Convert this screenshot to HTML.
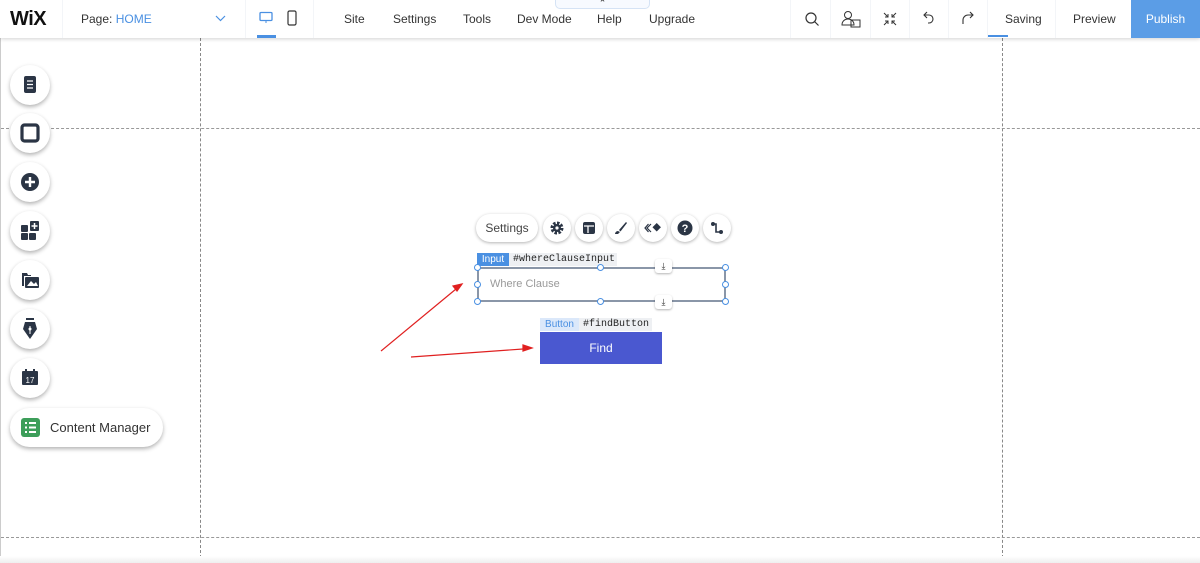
<!DOCTYPE html>
<html><head><meta charset="utf-8"><style>
*{margin:0;padding:0;box-sizing:border-box}
body{width:1200px;height:563px;overflow:hidden;background:#fff;font-family:"Liberation Sans",sans-serif;position:relative;color:#333}
.top{position:absolute;left:0;top:0;width:1200px;height:38px;background:#fff;box-shadow:0 1px 4px rgba(0,0,0,.18);z-index:5}
.t{position:absolute;top:12px;font-size:12px;color:#333}
.sep{position:absolute;top:0;width:1px;height:38px;background:#f3f5f8}
.vd{position:absolute;top:38px;width:0;height:525px;border-left:1px dashed #888}
.hd{position:absolute;left:1px;width:1199px;height:0;border-top:1px dashed #999}
.cb{position:absolute;left:10px;width:40px;height:40px;border-radius:50%;background:#fff;box-shadow:0 2px 4px rgba(0,0,0,.3);display:flex;align-items:center;justify-content:center}
.tb{position:absolute;top:214px;width:28px;height:28px;border-radius:50%;background:#fff;box-shadow:0 1px 3px rgba(0,0,0,.3);display:flex;align-items:center;justify-content:center}
.h{position:absolute;width:7px;height:7px;border-radius:50%;background:#fff;border:1px solid #4a90e2}
.mono{font-family:"Liberation Mono",monospace}
</style></head><body>
<div style="position:absolute;left:0;top:0;width:1px;height:563px;background:#ccc"></div>
<div class="vd" style="left:200px"></div>
<div class="vd" style="left:1002px"></div>
<div class="hd" style="top:128px"></div>
<div class="hd" style="top:537px"></div>
<div style="position:absolute;left:0;top:556px;width:1200px;height:7px;background:linear-gradient(#fff,#eee)"></div>

<div class="top">
<div style="position:absolute;left:10px;top:8px;font-size:20px;font-weight:bold;letter-spacing:-0.5px;color:#111">WiX</div>
<div class="sep" style="left:62px"></div>
<div class="t" style="left:81px">Page: <span style="color:#4a90e2">HOME</span></div>
<svg style="position:absolute;left:215px;top:15px" width="11" height="7"><path d="M1 1l4.5 4.5L10 1" fill="none" stroke="#4a90e2" stroke-width="1.2"/></svg>
<div class="sep" style="left:245px"></div>
<svg style="position:absolute;left:259px;top:11px" width="14" height="14"><rect x="1" y="1.5" width="12" height="8" rx="1" fill="none" stroke="#4a90e2" stroke-width="1.3"/><path d="M7 10v2" stroke="#4a90e2"/></svg>
<div style="position:absolute;left:257px;top:35px;width:19px;height:3px;background:#4a90e2"></div>
<svg style="position:absolute;left:287px;top:10px" width="10" height="16"><rect x="1" y="1" width="8" height="14" rx="1.5" fill="none" stroke="#333" stroke-width="1.2"/></svg>
<div class="sep" style="left:313px"></div>
<div class="t" style="left:344px">Site</div>
<div class="t" style="left:393px">Settings</div>
<div class="t" style="left:463px">Tools</div>
<div class="t" style="left:517px">Dev Mode</div>
<div class="t" style="left:597px">Help</div>
<div class="t" style="left:649px">Upgrade</div>
<div style="position:absolute;left:555px;top:-2px;width:95px;height:11px;border:1px solid #d5e3f5;border-radius:0 0 5px 5px;background:#f7faff;font-size:9px;text-align:center;line-height:8px">&#8963;</div>
<div class="sep" style="left:790px"></div>
<svg style="position:absolute;left:804px;top:11px" width="16" height="16"><circle cx="7" cy="7" r="5" fill="none" stroke="#333" stroke-width="1.2"/><path d="M10.5 10.5l4 4" stroke="#333" stroke-width="1.2"/></svg>
<div class="sep" style="left:830px"></div>
<svg style="position:absolute;left:841px;top:10px" width="20" height="18"><circle cx="7" cy="5" r="3.5" fill="none" stroke="#333"/><path d="M1 15c0-4 3-6 6-6s6 2 6 6z M10 10h9v7h-9z" fill="#fff" stroke="#333"/></svg>
<div class="sep" style="left:870px"></div>
<svg style="position:absolute;left:883px;top:12px" width="14" height="14"><path d="M1 1l4 4M5 2v3H2M13 1l-4 4M9 2v3h3M1 13l4-4M2 9h3v3M13 13l-4-4M12 9H9v3" fill="none" stroke="#333"/></svg>
<div class="sep" style="left:909px"></div>
<svg style="position:absolute;left:922px;top:11px" width="14" height="16"><path d="M5 1L2 4l3 3M2 4h5a4 4 0 010 8H6" fill="none" stroke="#333" stroke-width="1.1"/></svg>
<div class="sep" style="left:948px"></div>
<svg style="position:absolute;left:961px;top:11px" width="14" height="16"><path d="M9 1l3 3-3 3M12 4H7a5 5 0 00-5 5v4" fill="none" stroke="#333" stroke-width="1.1"/></svg>
<div class="sep" style="left:987px"></div>
<div class="t" style="left:1005px">Saving</div>
<div style="position:absolute;left:988px;top:35px;width:20px;height:2px;background:#4a90e2"></div>
<div class="sep" style="left:1055px"></div>
<div class="t" style="left:1073px">Preview</div>
<div style="position:absolute;left:1131px;top:0;width:69px;height:38px;background:#5b9de6;color:#fff;font-size:12px;line-height:38px;text-align:center">Publish</div>
</div>

<div class="cb" style="top:65px"><svg width="18" height="20"><rect x="3" y="1" width="12" height="17" rx="2" fill="#2b3545"/><path d="M6 6h6M6 9.5h6M6 13h6" stroke="#fff" stroke-width="1.3"/></svg></div>
<div class="cb" style="top:113px"><svg width="20" height="20"><rect x="2" y="2" width="16" height="16" rx="2.5" fill="none" stroke="#2b3545" stroke-width="3.2"/></svg></div>
<div class="cb" style="top:162px"><svg width="20" height="20"><circle cx="10" cy="10" r="9" fill="#2b3545"/><path d="M10 5v10M5 10h10" stroke="#fff" stroke-width="2.4"/></svg></div>
<div class="cb" style="top:211px"><svg width="20" height="20"><rect x="1" y="4" width="7" height="7" rx="1" fill="#2b3545"/><rect x="1" y="12" width="7" height="7" rx="1" fill="#2b3545"/><rect x="9" y="12" width="7" height="7" rx="1" fill="#2b3545"/><rect x="10" y="0" width="9" height="10" rx="1" fill="#2b3545"/><path d="M14.5 2v6M11.5 5h6" stroke="#fff" stroke-width="1.5"/></svg></div>
<div class="cb" style="top:260px"><svg width="20" height="20"><path d="M2 3h5l1 2h3v1H4v10H2z" fill="#2b3545"/><rect x="5" y="7" width="14" height="11" rx="1" fill="#2b3545"/><path d="M7 16l4-5 3 3 2-2 2 4z" fill="#fff"/></svg></div>
<div class="cb" style="top:309px"><svg width="20" height="22"><rect x="6" y="0" width="8" height="2" fill="#2b3545"/><path d="M5 4h10l2 7-7 10-7-10z" fill="#2b3545"/><path d="M10 8v8" stroke="#fff"/><circle cx="10" cy="11" r="1.5" fill="#fff"/></svg></div>
<div class="cb" style="top:358px"><svg width="20" height="20"><rect x="2" y="3" width="16" height="14" rx="1" fill="#2b3545"/><path d="M6 1v4M14 1v4" stroke="#2b3545" stroke-width="2"/><text x="10" y="15" font-size="8" fill="#fff" text-anchor="middle" font-family="Liberation Sans">17</text></svg></div>
<div style="position:absolute;left:10px;top:408px;width:153px;height:39px;border-radius:20px;background:#fff;box-shadow:0 2px 4px rgba(0,0,0,.3)">
<svg style="position:absolute;left:11px;top:10px" width="19" height="19"><rect width="19" height="19" rx="3" fill="#3d9e5a"/><path d="M4 5h2M8 5h7M4 9.5h2M8 9.5h7M4 14h2M8 14h7" stroke="#fff" stroke-width="2"/></svg>
<div style="position:absolute;left:40px;top:12px;font-size:13px;color:#333">Content Manager</div></div>

<div style="position:absolute;left:476px;top:214px;width:62px;height:28px;border-radius:14px;background:#fff;box-shadow:0 1px 3px rgba(0,0,0,.3);font-size:12px;line-height:28px;text-align:center;color:#444">Settings</div>
<div class="tb" style="left:543px"><svg width="16" height="16"><circle cx="8" cy="8" r="5" fill="none" stroke="#2b3545" stroke-width="3" stroke-dasharray="2.5 1.4"/><circle cx="8" cy="8" r="4" fill="#2b3545"/><circle cx="8" cy="8" r="1.6" fill="#fff"/></svg></div>
<div class="tb" style="left:575px"><svg width="14" height="14"><rect x="1" y="1" width="12" height="12" rx="2" fill="#2b3545"/><path d="M2 5h10M6 5v7" stroke="#fff" stroke-width="1.3"/></svg></div>
<div class="tb" style="left:607px"><svg width="14" height="14"><path d="M12 1L5 9l1.5 1.5L13 2z" fill="#2b3545"/><path d="M4 10c-2 0-3 2-3 3h3l2-2z" fill="#2b3545"/></svg></div>
<div class="tb" style="left:639px"><svg width="18" height="12"><rect x="9" y="2" width="6" height="6" transform="rotate(45 12 6)" fill="#2b3545"/><path d="M7 2L3 6l4 4M4.5 2L1 6l3.5 4" fill="none" stroke="#2b3545" stroke-width="1.2"/></svg></div>
<div class="tb" style="left:671px"><svg width="16" height="16"><circle cx="8" cy="8" r="7.5" fill="#2b3545"/><text x="8" y="12" font-size="11" font-weight="bold" fill="#fff" text-anchor="middle" font-family="Liberation Sans">?</text></svg></div>
<div class="tb" style="left:703px"><svg width="14" height="14"><circle cx="3" cy="3" r="2" fill="#2b3545"/><circle cx="11" cy="11" r="2" fill="#2b3545"/><path d="M3 3h3v8h5" fill="none" stroke="#2b3545" stroke-width="1.6"/></svg></div>

<div style="position:absolute;left:477px;top:253px;width:32px;height:13px;background:#4a90e2;color:#fff;font-size:10px;line-height:13px;text-align:center">Input</div>
<div class="mono" style="position:absolute;left:509px;top:253px;width:108px;height:13px;background:#eef0f3;color:#222;font-size:10px;line-height:13px;padding-left:4px;white-space:nowrap">#whereClauseInput</div>
<div style="position:absolute;left:477px;top:267px;width:249px;height:35px;border:2px solid #8a96a8;background:#fff"></div>
<div style="position:absolute;left:490px;top:278px;font-size:11px;color:#999">Where Clause</div>
<div class="h" style="left:474px;top:264px"></div><div class="h" style="left:597px;top:264px"></div><div class="h" style="left:722px;top:264px"></div>
<div class="h" style="left:474px;top:281px"></div><div class="h" style="left:722px;top:281px"></div>
<div class="h" style="left:474px;top:298px"></div><div class="h" style="left:597px;top:298px"></div><div class="h" style="left:722px;top:298px"></div>
<div style="position:absolute;left:655px;top:259px;width:17px;height:14px;border-radius:3px;background:#fff;box-shadow:0 1px 2px rgba(0,0,0,.3);font-size:9px;text-align:center;line-height:14px">⤓</div>
<div style="position:absolute;left:655px;top:295px;width:17px;height:14px;border-radius:3px;background:#fff;box-shadow:0 1px 2px rgba(0,0,0,.3);font-size:9px;text-align:center;line-height:14px">⤓</div>

<div style="position:absolute;left:540px;top:318px;width:39px;height:13px;background:#dbe8fa;color:#4a90e2;font-size:10px;line-height:13px;text-align:center">Button</div>
<div class="mono" style="position:absolute;left:579px;top:318px;width:73px;height:13px;background:#eef0f3;color:#222;font-size:10px;line-height:13px;padding-left:4px;white-space:nowrap">#findButton</div>
<div style="position:absolute;left:540px;top:332px;width:122px;height:32px;background:#4a58d0;color:#fff;font-size:12px;line-height:32px;text-align:center">Find</div>

<svg style="position:absolute;left:0;top:0" width="1200" height="563"><g stroke="#e02020" stroke-width="1.2" fill="#e02020"><path d="M381 351L456 289"/><path d="M462 284l-9 2 4 5z"/><path d="M411 357L523 349"/><path d="M532 348l-9-3 0 6z"/></g></svg>
</body></html>
